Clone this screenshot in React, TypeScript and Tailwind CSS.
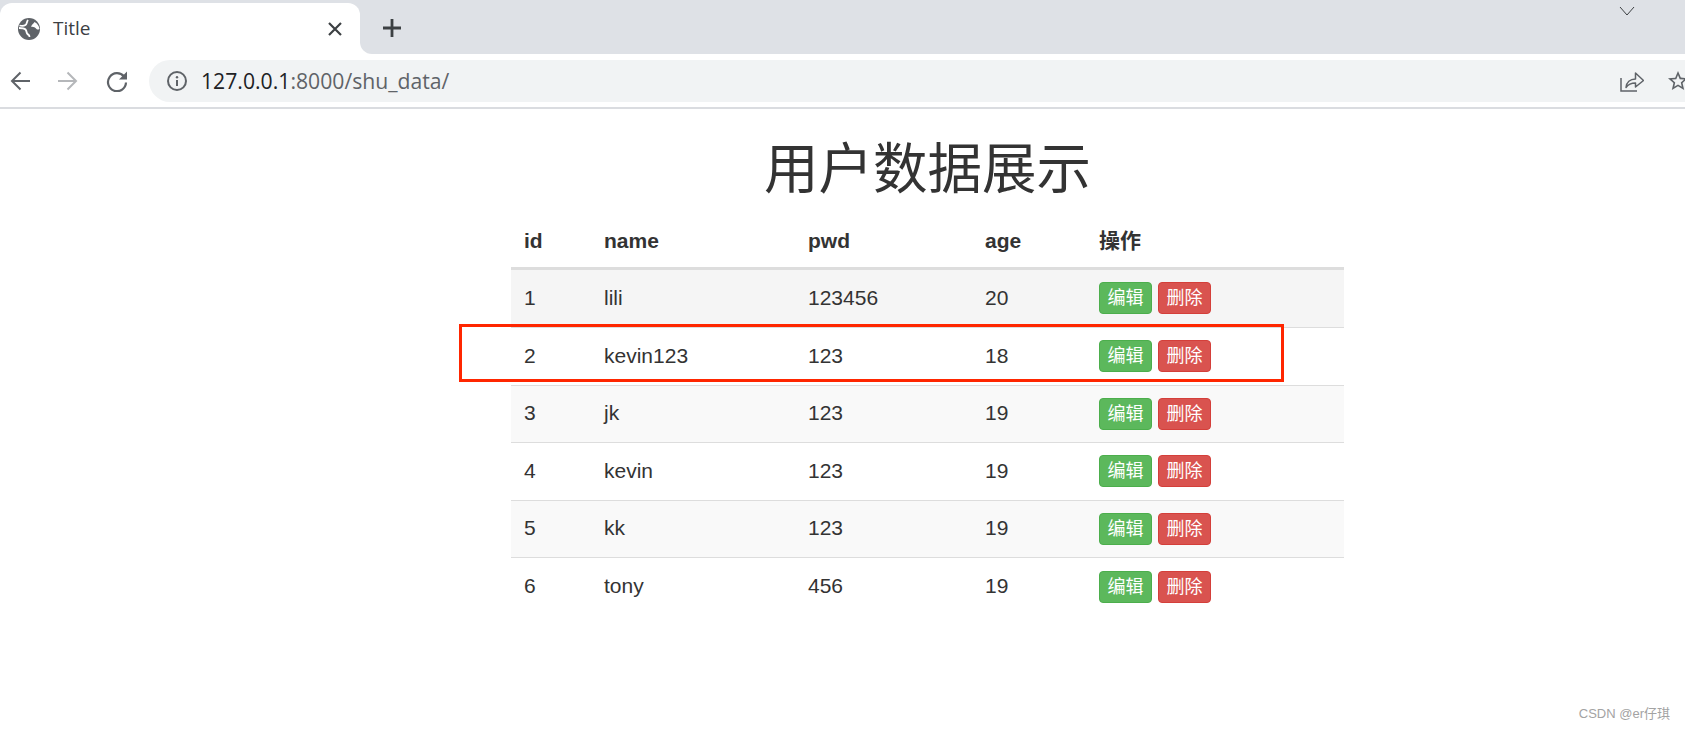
import { MdStarBorder } from "react-icons/md";

const rows = [
  { id: 1, name: "lili", pwd: "123456", age: 20, bg: "bg-[#f5f5f5]" },
  { id: 2, name: "kevin123", pwd: "123", age: 18, bg: "bg-white" },
  { id: 3, name: "jk", pwd: "123", age: 19, bg: "bg-[#f9f9f9]" },
  { id: 4, name: "kevin", pwd: "123", age: 19, bg: "bg-white" },
  { id: 5, name: "kk", pwd: "123", age: 19, bg: "bg-[#f9f9f9]" },
  { id: 6, name: "tony", pwd: "456", age: 19, bg: "bg-white" },
];

const sans = "font-['Liberation_Sans','Noto_Sans_CJK_SC',sans-serif]";

function GlobeIcon() {
  return (
    <svg width="22" height="22" viewBox="0 0 22 22" className="shrink-0">
      <circle cx="11" cy="11" r="11" fill="#5f6368" />
      <path d="M1.500 7.500c2 .5 4.500 .5 6-.5 1.500-1 1-3 2.500-5M1 10c3 0 5 0 6.500 1.500 1.500 1.500 .5 3 2 4.500 1 1 2 .5 2 3" fill="none" stroke="#fff" strokeWidth="1.8" />
      <path d="M13 9c2-.5 4 .5 5.500 2 1 1 2 .5 3 0-.5-3-2-5.500-5-7-1 1.500-3 3-3.500 5z" fill="#fff" />
    </svg>
  );
}

function ArrowIcon({ color, flip }: { color: string; flip?: boolean }) {
  return (
    <svg width="20" height="20" viewBox="0 0 20 20" fill="none" stroke={color} strokeWidth="2" className={flip ? "rotate-180" : ""}>
      <path d="M20 10H2M10.500 1.500 2 10l8.500 8.500" />
    </svg>
  );
}

function ReloadIcon() {
  return (
    <svg width="22" height="22" viewBox="0 0 22 22" fill="none">
      <path d="M18 6.500A9 9 0 1 0 20 12.500" stroke="#5f6368" strokeWidth="2.200" />
      <path d="M21 1.500V9.500h-8z" fill="#5f6368" />
    </svg>
  );
}

function InfoIcon() {
  return (
    <svg width="20" height="20" viewBox="0 0 20 20" fill="none" className="shrink-0">
      <circle cx="10" cy="10" r="9" stroke="#5f6368" strokeWidth="2" />
      <path d="M10 9v6" stroke="#5f6368" strokeWidth="2" />
      <circle cx="10" cy="6.200" r="1.200" fill="#5f6368" />
    </svg>
  );
}

function ShareIcon() {
  return (
    <svg width="24" height="22" viewBox="0 0 24 22" fill="none" stroke="#5f6368" strokeWidth="1.500">
      <path d="M1 8v13h16" />
      <path d="M6 17.500c.5-5 4-8.500 9.500-8.500V3l8 7.500-8 6.500v-4c-4 0-7 1-9.500 4.500z" strokeLinejoin="round" />
    </svg>
  );
}

export default function App() {
  return (
    <div className={`relative h-[731px] w-full overflow-hidden bg-white text-[#333] ${sans}`}>
      {/* tab strip */}
      <div className="flex h-[54px] bg-white">
        <div className="w-[360px] bg-[#dee1e6] pt-[3px]">
          <div className="flex h-full items-center rounded-t-[12px] bg-white pl-[18px] pr-[18px]">
            <GlobeIcon />
            <span className="ml-[13px] flex-1 font-['Open_Sans',sans-serif] text-[19px] text-[#3c4043]">Title</span>
            <svg width="14" height="14" viewBox="0 0 14 14" stroke="#3c4043" strokeWidth="2.200">
              <path d="M1 1l12 12M13 1 1 13" />
            </svg>
          </div>
        </div>
        <div className="flex flex-1 rounded-bl-[12px] bg-[#dee1e6]">
          <div className="ml-[22px] flex h-full items-center pt-[2px]">
            <svg width="20" height="20" viewBox="0 0 20 20" stroke="#3c4043" strokeWidth="2.800">
              <path d="M10 1v18M1 10h18" />
            </svg>
          </div>
          <div className="ml-auto mr-[50px] pt-[6px]">
            <svg width="16" height="10" viewBox="0 0 16 10" fill="none" stroke="#3c4043" strokeWidth="1">
              <path d="M1 1l7 8 7-8" />
            </svg>
          </div>
        </div>
      </div>
      {/* toolbar */}
      <div className="flex h-[55px] items-center border-b-2 border-[#dadce0] bg-white pt-[1px]">
        <div className="ml-[10px] flex w-[139px] items-center gap-[28px]">
          <ArrowIcon color="#5f6368" />
          <ArrowIcon color="#b5b7ba" flip />
          <ReloadIcon />
        </div>
        <div className="flex h-[42px] flex-1 items-center rounded-l-[21px] bg-[#f1f3f4] pl-[18px]">
          <InfoIcon />
          <span className="ml-[14px] font-['Open_Sans',sans-serif] text-[21.200px] text-[#5f6368]">
            <span className="text-[#202124]">127.0.0.1</span>:8000/shu_data/
          </span>
          <div className="ml-auto flex items-center gap-[22px]">
            <ShareIcon />
            <div className="-mr-[5px]">
              <MdStarBorder size={24} color="#5f6368" />
            </div>
          </div>
        </div>
      </div>
      {/* page */}
      <div className="ml-[511px] w-[833px]">
        <h1 className="h-[105px] pt-[23px] text-center text-[54.500px] leading-[76px] font-normal text-[#333]">用户数据展示</h1>
        <table className="w-[833px] table-fixed border-collapse text-[21px]">
          <colgroup>
            <col className="w-[80px]" />
            <col className="w-[204px]" />
            <col className="w-[177px]" />
            <col className="w-[114px]" />
            <col className="w-[258px]" />
          </colgroup>
          <thead>
            <tr className="h-[54px] border-b-[3px] border-[#ddd] text-left font-bold">
              <th className="pl-[13px]">id</th>
              <th className="pl-[13px]">name</th>
              <th className="pl-[13px]">pwd</th>
              <th className="pl-[13px]">age</th>
              <th className="pl-[13px]">操作</th>
            </tr>
          </thead>
          <tbody>
            {rows.map((r) => (
              <tr key={r.id} className={`h-[57.500px] border-b border-[#ddd] first:h-[59.500px] last:border-b-0 ${r.bg}`}>
                <td className="pb-[2px] pl-[13px]">{r.id}</td>
                <td className="pb-[2px] pl-[13px]">{r.name}</td>
                <td className="pb-[2px] pl-[13px]">{r.pwd}</td>
                <td className="pb-[2px] pl-[13px]">{r.age}</td>
                <td className="pl-[13px]">
                  <div className="flex gap-[6px]">
                    <button className="h-[32px] w-[53px] rounded-[4px] border border-[#4cae4c] bg-[#5cb85c] text-[18px] leading-[28px] text-white">编辑</button>
                    <button className="h-[32px] w-[53px] rounded-[4px] border border-[#d43f3a] bg-[#d9534f] text-[18px] leading-[28px] text-white">删除</button>
                  </div>
                </td>
              </tr>
            ))}
          </tbody>
        </table>
      </div>
      {/* red annotation box */}
      <div className="absolute left-[459px] top-[324px] h-[58px] w-[825px] border-[3px] border-[#ff2600]" />
      {/* watermark */}
      <div className="absolute bottom-[8px] right-[15px] text-[13px] text-[#a3a3a3]">CSDN @er仔琪</div>
    </div>
  );
}
